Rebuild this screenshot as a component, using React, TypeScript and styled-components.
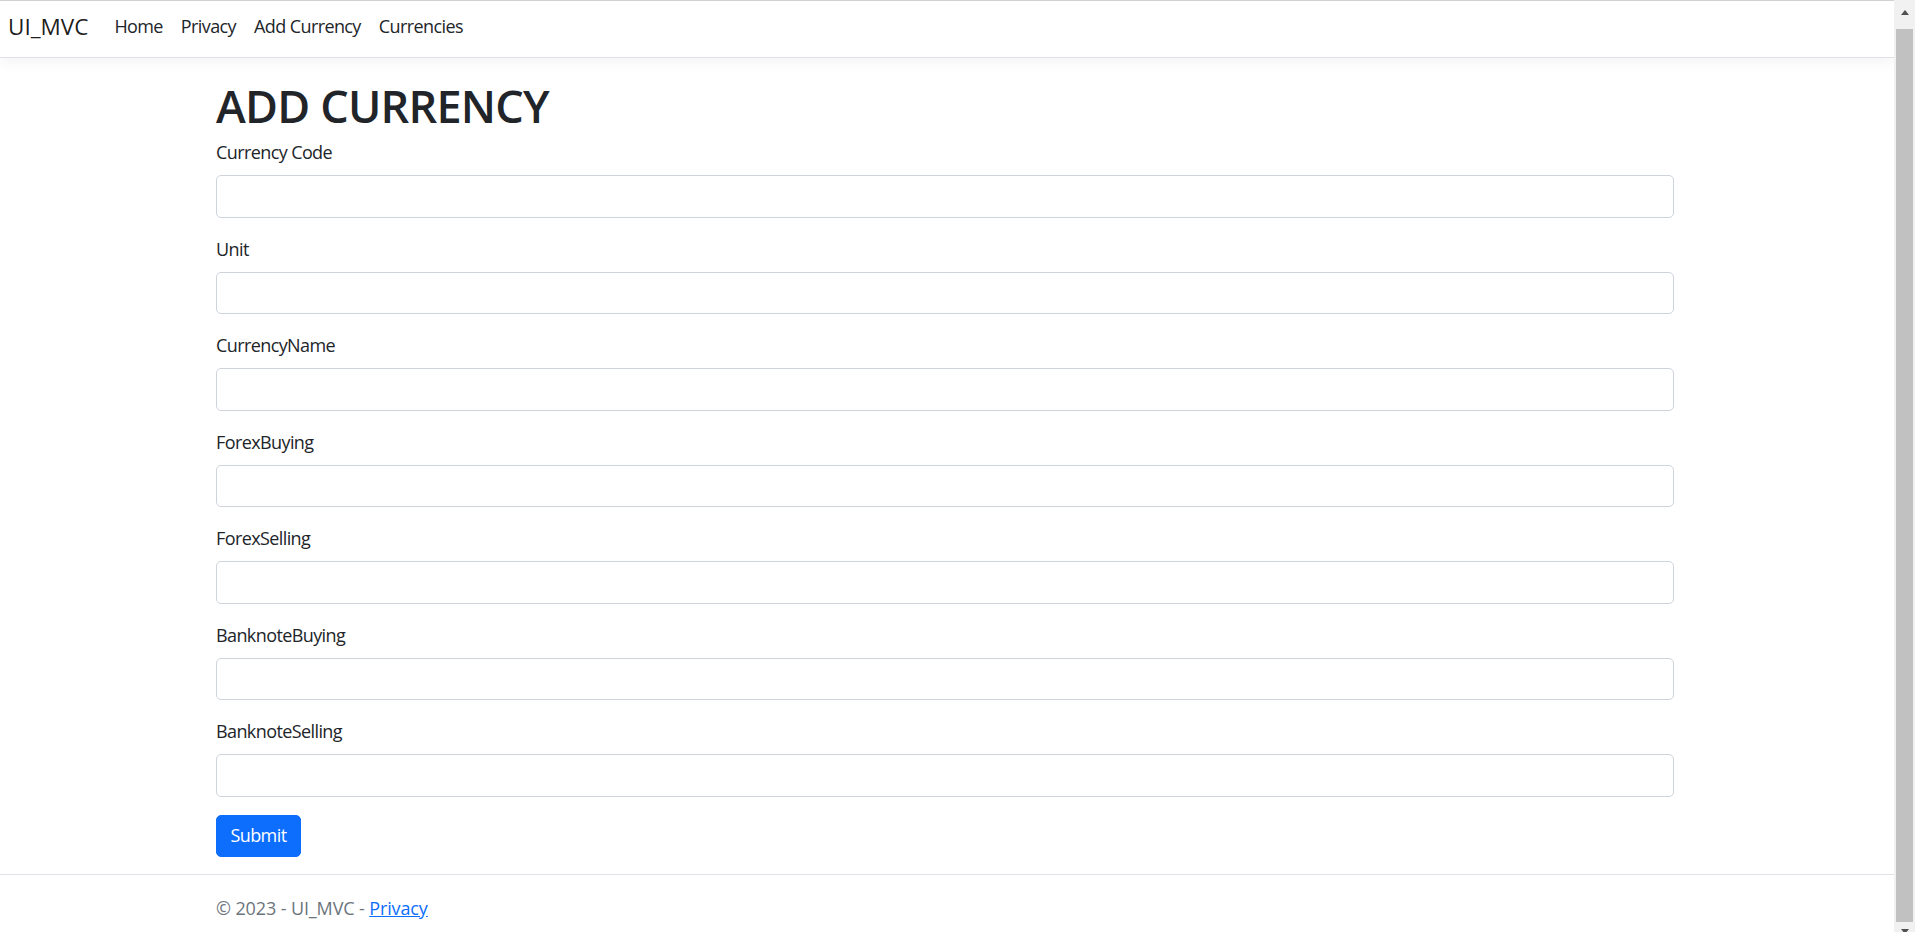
import styled, { createGlobalStyle } from "styled-components";

const GlobalStyle = createGlobalStyle`
  html, body {
    margin: 0;
    padding: 0;
    height: 100%;
    overflow: hidden;
    background: #fff;
  }
  * {
    box-sizing: border-box;
  }
  body {
    font-family: "Open Sans", "Noto Sans", "Liberation Sans", sans-serif;
    font-size: 18px;
    line-height: 1.5;
    color: #212529;
  }
`

const Shell = styled.div`
  display: flex;
  height: 100vh;
`
const Page = styled.div`
  flex: 1;
  display: flex;
  flex-direction: column;
  overflow: hidden;
`
const Navbar = styled.nav`
  height: 58px;
  flex-shrink: 0;
  display: flex;
  align-items: center;
  padding: 0 0 5px 8px;
  border-top: 1px solid #d2d2d2;
  border-bottom: 1px solid #dee2e6;
  box-shadow: 0 4.5px 13.5px rgba(0, 0, 0, 0.05);
  background: #fff;
  position: relative;
  z-index: 1;
`
const Brand = styled.a`
  font-size: 22.5px;
  color: rgba(0, 0, 0, 0.9);
  text-decoration: none;
  margin-right: 17px;
`
const NavLink = styled.a`
  padding: 0 9px;
  color: #212529;
  text-decoration: none;
  letter-spacing: -0.6px;
`
const Main = styled.main`
  width: 1458px;
  margin-left: 216px;
  padding-top: 21px;
`
const Title = styled.h1`
  margin: 0 0 6px;
  font-size: 45px;
  font-weight: 600;
  line-height: 1.2;
  letter-spacing: -0.8px;
  color: #212529;
`
const Field = styled.div`
  margin-bottom: 18px;
`
const Label = styled.label`
  display: block;
  margin-bottom: 9px;
  letter-spacing: -0.6px;
`
const Input = styled.input`
  display: block;
  width: 100%;
  height: 42.5px;
  padding: 6.75px 13.5px;
  font: inherit;
  color: #212529;
  background: #fff;
  border: 1px solid #ced4da;
  border-radius: 5px;
  outline: none;
`
const SubmitButton = styled.button`
  height: 42px;
  padding: 0 13.5px;
  font: inherit;
  letter-spacing: -0.6px;
  color: #fff;
  background: #0d6efd;
  border: 1px solid #0d6efd;
  border-radius: 5px;
  cursor: pointer;
`
const Footer = styled.footer`
  margin-top: 17px;
  border-top: 1px solid #dee2e6;
  line-height: 67.5px;
  color: #6c757d;
  letter-spacing: -0.12px;
  white-space: nowrap;
  flex-shrink: 0;
`
const FooterInner = styled.div`
  margin-left: 216px;
`
const FooterLink = styled.a`
  color: #0d6efd;
  text-decoration: underline;
`
const Scrollbar = styled.div`
  width: 21px;
  flex-shrink: 0;
  display: flex;
  flex-direction: column;
  background: #f1f1f1;
`
const ScrollButton = styled.div<{ $down?: boolean }>`
  height: ${p => (p.$down ? 10 : 29)}px;
  flex-shrink: 0;
  display: flex;
  justify-content: center;
  align-items: flex-start;
  padding-top: ${p => (p.$down ? 7 : 10)}px;
  overflow: hidden;
`
const Arrow = styled.div<{ $down?: boolean }>`
  width: 0;
  height: 0;
  border-left: 4.5px solid transparent;
  border-right: 4.5px solid transparent;
  ${p => (p.$down ? "border-top: 5px solid #505050;" : "border-bottom: 5px solid #505050;")}
`
const Thumb = styled.div`
  flex: 1;
  margin: 0 2px;
  background: #c1c1c1;
`

const fields = [
  "Currency Code",
  "Unit",
  "CurrencyName",
  "ForexBuying",
  "ForexSelling",
  "BanknoteBuying",
  "BanknoteSelling",
]

const App = () => {
  return (
    <>
      <GlobalStyle />
      <Shell>
        <Page>
          <Navbar>
            <Brand href="#">UI_MVC</Brand>
            <NavLink href="#">Home</NavLink>
            <NavLink href="#">Privacy</NavLink>
            <NavLink href="#">Add Currency</NavLink>
            <NavLink href="#">Currencies</NavLink>
          </Navbar>
          <Main>
            <Title>ADD CURRENCY</Title>
            <form onSubmit={e => e.preventDefault()}>
              {fields.map(name => (
                <Field key={name}>
                  <Label>{name}</Label>
                  <Input type="text" />
                </Field>
              ))}
              <SubmitButton type="submit">Submit</SubmitButton>
            </form>
          </Main>
          <Footer>
            <FooterInner>
              &copy; 2023 - UI_MVC - <FooterLink href="#">Privacy</FooterLink>
            </FooterInner>
          </Footer>
        </Page>
        <Scrollbar>
          <ScrollButton>
            <Arrow />
          </ScrollButton>
          <Thumb />
          <ScrollButton $down>
            <Arrow $down />
          </ScrollButton>
        </Scrollbar>
      </Shell>
    </>
  )
}

export default App
